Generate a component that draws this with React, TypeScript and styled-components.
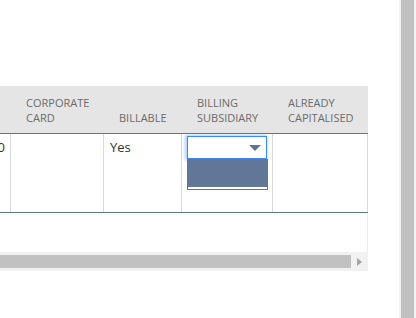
import React, { useLayoutEffect, useRef } from 'react';
import styled, { createGlobalStyle } from 'styled-components';

const GlobalStyle = createGlobalStyle`
  html, body {
    margin: 0;
    padding: 0;
    background: #fff;
    font-family: "Open Sans", "Liberation Sans", sans-serif;
  }
`;

const columns = '91px 93px 78px 91px 95px';

const Page = styled.div`
  display: flex;
  width: 416px;
  height: 318px;
  overflow: hidden;
`;

const Main = styled.div`
  width: 399px;
  padding-top: 86px;
`;

const TableBlock = styled.div`
  width: 368px;
`;

const ScrollArea = styled.div`
  width: 368px;
  overflow: hidden;
`;

const Table = styled.div`
  width: 448px;
`;

const HeaderRow = styled.div`
  display: grid;
  grid-template-columns: ${columns};
  height: 47px;
  background: #e5e5e5;
  border-bottom: 1px solid #61759b;
`;

const HeaderCell = styled.div`
  display: flex;
  align-items: flex-end;
  padding: 0 15px 8px 15px;
  font-size: 11px;
  line-height: 15px;
  color: #6b6b6b;
  text-transform: uppercase;
`;

const BodyRow = styled.div`
  display: grid;
  grid-template-columns: ${columns};
  height: 78px;
  border-bottom: 1px solid #61759b;
`;

const Cell = styled.div<{ $right?: boolean }>`
  border-right: 1px solid #d9d9d9;
  padding: ${(p) => (p.$right ? '4px 5px 0 0' : '4px 0 0 6px')};
  text-align: ${(p) => (p.$right ? 'right' : 'left')};
  font-size: 13px;
  line-height: 18px;
  color: #333;
  white-space: nowrap;
`;

const SelectCell = styled.div`
  border-right: 1px solid #d9d9d9;
  padding: 2px 0 0 5px;
`;

const Select = styled.div`
  width: 81px;
`;

const SelectInput = styled.div`
  box-sizing: border-box;
  height: 23px;
  width: 80px;
  border: 1px solid #3d8bf2;
  box-shadow: -1px 0 3px 1px rgba(77, 144, 254, 0.45);
  display: flex;
  align-items: center;
  justify-content: flex-end;
  padding-right: 5px;
  background: #fff;
`;

const Arrow = styled.svg`
  width: 12px;
  height: 6px;
  display: block;
`;

const SelectList = styled.div`
  box-sizing: border-box;
  height: 31px;
  border: 1px solid #2a80f2;
  border-top: none;
  padding-bottom: 2px;
  background: #fff;
`;

const ListOption = styled.div`
  height: 28px;
  background: #627797;
`;

const Filler = styled.div`
  height: 39px;
  border-right: 1px solid #ededed;
  box-sizing: border-box;
`;

const HScroll = styled.div`
  display: flex;
  height: 19px;
  background: #f1f1f1;
`;

const HThumb = styled.div`
  width: 351px;
  height: 13px;
  margin-top: 3px;
  background: #c1c1c1;
`;

const ArrowButton = styled.div`
  flex: 1;
  display: flex;
  align-items: center;
  justify-content: center;
`;

const VScroll = styled.div`
  width: 17px;
  height: 318px;
  background: #f1f1f1;
  display: flex;
  justify-content: center;
`;

const VThumb = styled.div`
  width: 13px;
  height: 100%;
  background: #c1c1c1;
`;

const App: React.FC = () => {
  const scrollRef = useRef<HTMLDivElement>(null);

  // the grid is shown scrolled to its right end
  useLayoutEffect(() => {
    if (scrollRef.current) scrollRef.current.scrollLeft = 80;
  }, []);

  return (
    <>
      <GlobalStyle />
      <Page>
        <Main>
          <TableBlock>
            <ScrollArea ref={scrollRef}>
              <Table>
                <HeaderRow>
                  <HeaderCell />
                  <HeaderCell>Corporate<br />Card</HeaderCell>
                  <HeaderCell>Billable</HeaderCell>
                  <HeaderCell>Billing<br />Subsidiary</HeaderCell>
                  <HeaderCell>Already<br />Capitalised</HeaderCell>
                </HeaderRow>
                <BodyRow>
                  <Cell $right>120.00</Cell>
                  <Cell />
                  <Cell>Yes</Cell>
                  <SelectCell>
                    <Select>
                      <SelectInput>
                        <Arrow viewBox="0 0 12 6">
                          <path d="M0 0 H12 L6 6 Z" fill="#5f7396" />
                        </Arrow>
                      </SelectInput>
                      <SelectList>
                        <ListOption />
                      </SelectList>
                    </Select>
                  </SelectCell>
                  <Cell />
                </BodyRow>
              </Table>
            </ScrollArea>
            <Filler />
            <HScroll>
              <HThumb />
              <ArrowButton>
                <svg width="5" height="8" viewBox="0 0 5 8">
                  <path d="M0 0 L5 4 L0 8 Z" fill="#a3a3a3" />
                </svg>
              </ArrowButton>
            </HScroll>
          </TableBlock>
        </Main>
        <VScroll>
          <VThumb />
        </VScroll>
      </Page>
    </>
  );
};

export default App;
